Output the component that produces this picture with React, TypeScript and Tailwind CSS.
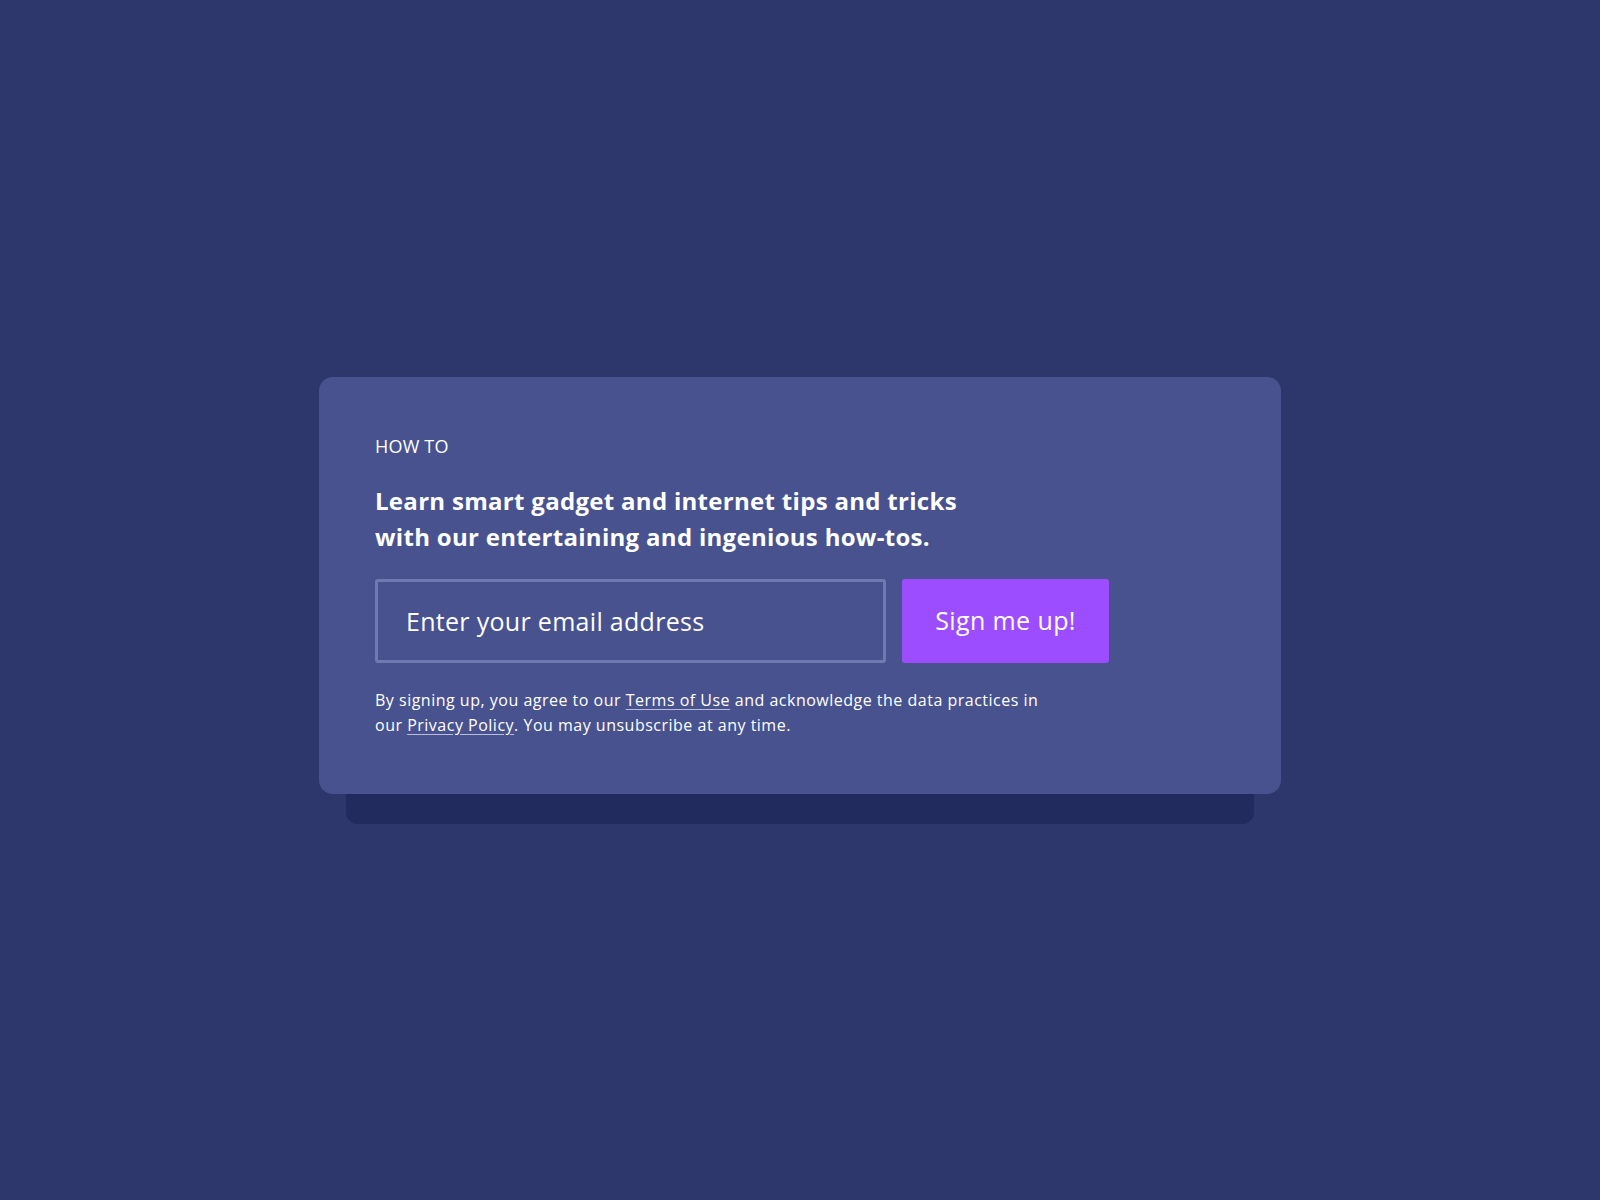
// Newsletter sign-up card, centred on a dark indigo page.
export default function App() {
  return (
    <div className="flex min-h-screen items-center justify-center bg-[#2e376b] font-['Open_Sans',sans-serif] text-white">
      <div className="w-[962px]">
        {/* Card */}
        <div className="rounded-[14px] bg-[#48528f] p-14">
          <p className="-mt-px text-[18px] leading-[28px] tracking-[0.2px]">HOW TO</p>

          <h2 className="mt-[23px] text-[24px] font-bold leading-[36px] tracking-[0.3px]">
            Learn smart gadget and internet tips and tricks
            <br />
            with our entertaining and ingenious how-tos.
          </h2>

          <form className="mt-6 flex gap-4" onSubmit={(e) => e.preventDefault()}>
            <input
              type="email"
              placeholder="Enter your email address"
              className="h-[84px] w-[511px] rounded-[3px] border-[3px] border-[#7079b0] bg-transparent px-7 text-[25px] tracking-[0.3px] text-white outline-none placeholder:text-white"
            />
            <button
              type="submit"
              className="h-[84px] w-[207px] rounded-[3px] bg-[#9b4dff] text-[25px] tracking-[0.4px] text-white"
            >
              Sign me up!
            </button>
          </form>

          <p className="mt-[25px] max-w-[690px] text-[16px] leading-[25px] tracking-[0.5px]">
            <span>By signing up, you agree to our </span>
            <a href="#" className="underline decoration-[#b9bdd8] underline-offset-[3px]">
              Terms of Use
            </a>
            <span> and acknowledge the data practices in</span>
            <br />
            <span>our </span>
            <a href="#" className="underline decoration-[#b9bdd8] underline-offset-[3px]">
              Privacy Policy
            </a>
            <span>. You may unsubscribe at any time.</span>
          </p>
        </div>

        {/* Back sheet peeking out below the card */}
        <div className="mx-[27px] h-[30px] rounded-b-[12px] bg-[#222b5d]" />
      </div>
    </div>
  );
}
